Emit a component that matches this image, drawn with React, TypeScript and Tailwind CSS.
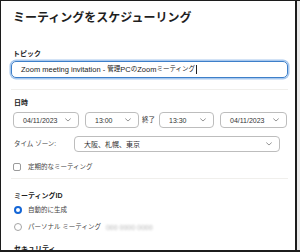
import React from "react";

const font = { fontFamily: '"Liberation Sans", "Noto Sans CJK JP", sans-serif' };

function Chevron() {
  return (
    <svg width="6" height="4" viewBox="0 0 6 4" className="shrink-0">
      <path d="M0.6 0.8 L3 3 L5.4 0.8" fill="none" stroke="#8a8a8a" strokeWidth="0.9" strokeLinecap="round" strokeLinejoin="round" />
    </svg>
  );
}

function Select({ w, text, cls = "" }: { w: string; text: string; cls?: string }) {
  return (
    <div className={`${w} h-[16px] shrink-0 flex items-center justify-between border border-[#bdbdbd] rounded-[4px] pl-[9px] pr-[7px] text-[7px] text-[#333] ${cls}`}>
      <span className="leading-none">{text}</span>
      <Chevron />
    </div>
  );
}

export default function App() {
  return (
    <div className="w-[300px] h-[252px] bg-[#1c1c1c] pt-px pl-px pb-[2px] flex flex-col overflow-hidden" style={font}>
      <div className="flex h-[249px]">
        <div className="w-[294px] h-full bg-white overflow-hidden pl-[10px] pr-[7px] pt-[9px]">
          <div className="pl-[2px] text-[12px] leading-[16px] font-bold text-[#1f1f1f]">ミーティングをスケジューリング</div>

          <div className="pl-[2px] mt-[23px] text-[7px] leading-[10px] font-bold text-[#222]">トピック</div>
          <div className="mt-[2px] h-[17px] flex items-center rounded-[5px] border border-[#3d7fc9] shadow-[0_0_0_1.5px_#a8c8ee] pl-[9px] text-[7.5px] text-[#222] whitespace-pre">
            <span className="leading-none">Zoom meeting invitation - </span>
            <span className="leading-none text-[6.5px]">管理</span>
            <span className="leading-none">PC</span>
            <span className="leading-none text-[6.5px]">の</span>
            <span className="leading-none">Zoom</span>
            <span className="leading-none text-[6.5px]">ミーティング</span>
            <span className="w-px h-[9px] bg-[#222] ml-px" />
          </div>

          <div className="mt-[11px] h-px bg-[#f0efec]" />

          <div className="pl-[3px] mt-[8px] text-[7px] leading-[10px] font-bold text-[#222]">日時</div>
          <div className="mt-[4px] flex items-center pl-[2px]">
            <Select w="w-[66px]" text="04/11/2023" />
            <Select w="w-[54px]" text="13:00" cls="ml-[6px]" />
            <span className="ml-[3px] text-[6.5px] text-[#333] leading-none">終了</span>
            <Select w="w-[55px]" text="13:30" cls="ml-[4px]" />
            <Select w="w-[67px]" text="04/11/2023" cls="ml-[6px]" />
          </div>

          <div className="mt-[8px] flex items-center pl-[3px]">
            <span className="w-[60px] text-[6.5px] text-[#444] leading-none">タイム ゾーン:</span>
            <Select w="w-[206px]" text="大阪、札幌、東京" />
          </div>

          <div className="mt-[10px] h-[10px] flex items-center pl-[2px]">
            <span className="w-[8px] h-[8px] border border-[#9a9a9a] rounded-[2px]" />
            <span className="ml-[7px] text-[6.5px] text-[#444] leading-none">定期的なミーティング</span>
          </div>

          <div className="mt-[6px] h-px bg-[#f0efec]" />

          <div className="pl-[3px] mt-[12px] text-[7px] leading-[10px] font-bold text-[#222]">ミーティングID</div>
          <div className="mt-[4px] h-[10px] flex items-center pl-[3px]">
            <span className="w-[8px] h-[8px] rounded-full border-[2.5px] border-[#1466d6] bg-white" />
            <span className="ml-[6px] text-[6.5px] text-[#444] leading-none">自動的に生成</span>
          </div>
          <div className="mt-[7px] h-[10px] flex items-center pl-[3px]">
            <span className="w-[8px] h-[8px] rounded-full border border-[#a5a5a5] bg-white" />
            <span className="ml-[6px] text-[6.5px] text-[#444] leading-none">パーソナル ミーティング</span>
            <span className="ml-[5px] text-[7px] text-[#b5b5b5] leading-none blur-[1.2px]">000 0000 0000</span>
          </div>

          <div className="pl-[3px] mt-[12px] text-[7px] leading-[10px] font-bold text-[#222]">セキュリティ</div>
        </div>
        <div className="w-[2px] h-full bg-[#1c1c1c]" />
        <div className="flex-1 h-full bg-[#e9e9e9]" />
      </div>
    </div>
  );
}
